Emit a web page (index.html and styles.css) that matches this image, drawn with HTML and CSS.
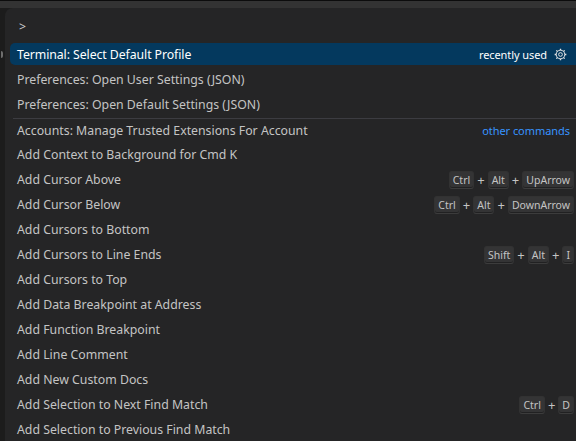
FILE: index.html
```html
<!DOCTYPE html>
<html lang="en">
<head>
<meta charset="utf-8">
<title>Command Palette</title>
<link rel="stylesheet" href="styles.css">
</head>
<body>
<div class="titlebar"></div>
<span class="behind"></span>
<div class="palette">
  <div class="input">&gt;</div>
  <div class="row active"><span class="label">Terminal: Select Default Profile</span><span class="tag">recently used</span>
    <svg class="gear" viewBox="0 0 16 16" width="13" height="13"><circle cx="8" cy="8" r="2.3" fill="none" stroke="currentColor" stroke-width="1.2"/><circle cx="8" cy="8" r="5.3" fill="none" stroke="currentColor" stroke-width="1.2"/><path d="M8 .8v2M8 13.200v2M.8 8h2M13.200 8h2M2.900 2.900l1.400 1.400M11.700 11.700l1.400 1.400M2.900 13.100l1.400-1.400M11.700 4.300l1.400-1.400" stroke="currentColor" stroke-width="1.6"/></svg>
  </div>
  <div class="row"><span class="label">Preferences: Open User Settings (JSON)</span></div>
  <div class="row"><span class="label">Preferences: Open Default Settings (JSON)</span></div>
  <div class="row sep"><span class="label">Accounts: Manage Trusted Extensions For Account</span><span class="link">other commands</span></div>
  <div class="row"><span class="label">Add Context to Background for Cmd K</span></div>
  <div class="row"><span class="label">Add Cursor Above</span><span class="keys"><kbd>Ctrl</kbd><i>+</i><kbd>Alt</kbd><i>+</i><kbd>UpArrow</kbd></span></div>
  <div class="row"><span class="label">Add Cursor Below</span><span class="keys"><kbd>Ctrl</kbd><i>+</i><kbd>Alt</kbd><i>+</i><kbd>DownArrow</kbd></span></div>
  <div class="row"><span class="label">Add Cursors to Bottom</span></div>
  <div class="row"><span class="label">Add Cursors to Line Ends</span><span class="keys"><kbd>Shift</kbd><i>+</i><kbd>Alt</kbd><i>+</i><kbd>I</kbd></span></div>
  <div class="row"><span class="label">Add Cursors to Top</span></div>
  <div class="row"><span class="label">Add Data Breakpoint at Address</span></div>
  <div class="row"><span class="label">Add Function Breakpoint</span></div>
  <div class="row"><span class="label">Add Line Comment</span></div>
  <div class="row"><span class="label">Add New Custom Docs</span></div>
  <div class="row"><span class="label">Add Selection to Next Find Match</span><span class="keys"><kbd>Ctrl</kbd><i>+</i><kbd>D</kbd></span></div>
  <div class="row"><span class="label">Add Selection to Previous Find Match</span></div>
</div>
</body>
</html>
```
FILE: styles.css
```css
html, body { margin: 0; height: 441px; overflow: hidden; background: #1c1c1c; }
body { position: relative; box-sizing: border-box; border-top: 1px solid #0c0c0c; font-family: "Noto Sans", sans-serif; font-size: 12.3px; color: #c4c4c4; }
.titlebar { height: 7px; background: #333333; }
.behind { position: absolute; left: 1px; top: 50px; width: 2px; height: 7px; border-radius: 0 2px 2px 0; background: #6e6e6e; }
.palette { position: relative; margin-left: 5px; background: #252526; border-radius: 8px 0 0 0; height: 433px; overflow: hidden; }
.input { height: 35px; padding: 10px 0 0 14px; box-sizing: border-box; color: #cccccc; line-height: 18px; }
.row { box-sizing: border-box; height: 25px; margin-left: 5px; padding: 0 6px 0 7px; display: flex; align-items: center; white-space: nowrap; }
.row.active { height: 22px; margin-bottom: 1.5px; padding-right: 9px; background: #04395e; color: #ffffff; border-radius: 5px 0 0 5px; }
.active .label { letter-spacing: -0.08px; }
.label { flex: 1; }
.tag { font-size: 11px; letter-spacing: -0.08px; }
.gear { margin-left: 7px; color: #e4e4e4; }
.row.sep { border-top: 1px solid #3c3c41; margin-top: 1.5px; height: 24px; margin-left: 8px; padding-left: 4px; }
.link { color: #3794ff; font-size: 11px; letter-spacing: -0.05px; }
.keys { display: flex; align-items: center; font-size: 10.5px; margin-right: -4px; }
.keys i { font-style: normal; font-size: 13px; margin: 0 3px; color: #c4c4c4; }
kbd { font: inherit; background: rgba(128, 128, 128, 0.17); color: #c4c4c4; border: 1px solid rgba(51, 51, 51, 0.6); border-bottom-color: rgba(68, 68, 68, 0.6); box-shadow: inset 0 -1px 0 rgba(0, 0, 0, 0.36); border-radius: 3px; padding: 0 3px; line-height: 16px; }
```
